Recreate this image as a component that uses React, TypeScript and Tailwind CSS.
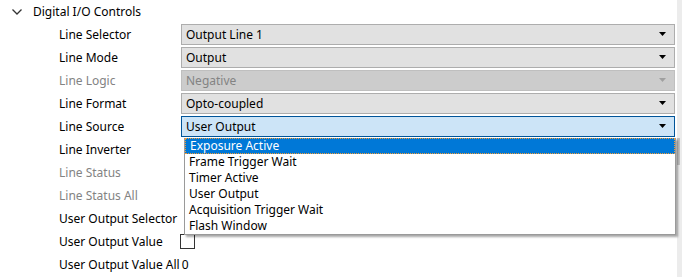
import React from "react";

const font = { fontFamily: '"Noto Sans", "DejaVu Sans", sans-serif' };

function Arrow({ disabled }: { disabled?: boolean }) {
  return (
    <svg width="8" height="5" viewBox="0 0 8 5" className="shrink-0">
      <path d="M0 0H7L3.5 4Z" fill={disabled ? "#a0a0a0" : "#000"} />
    </svg>
  );
}

function Select({ value, variant }: { value: string; variant?: "disabled" | "focus" }) {
  const cls =
    variant === "disabled"
      ? "bg-[#cccccc] border-[#bfbfbf] text-[#838383]"
      : variant === "focus"
      ? "bg-[#cce4f7] border-[#005499] text-black"
      : "bg-[#e1e1e1] border-[#adadad] text-black";
  return (
    <div className={`flex h-[21px] w-[494px] items-center justify-between border pl-[4px] pr-[7px] ${cls}`}>
      <span className="leading-none">{value}</span>
      <Arrow disabled={variant === "disabled"} />
    </div>
  );
}

function Row({ label, disabled, children }: { label: string; disabled?: boolean; children?: React.ReactNode }) {
  return (
    <div className="flex h-[23px] items-center">
      <div className={`w-[181px] shrink-0 pl-[59px] whitespace-nowrap ${disabled ? "text-[#838383]" : "text-black"}`}>
        {label}
      </div>
      {children}
    </div>
  );
}

export default function App() {
  const items = [
    "Exposure Active",
    "Frame Trigger Wait",
    "Timer Active",
    "User Output",
    "Acquisition Trigger Wait",
    "Flash Window",
  ];
  return (
    <div className="relative flex h-[277px] w-[682px] overflow-hidden bg-white text-[12px]" style={font}>
      <div className="w-[677px] shrink-0">
        <div className="flex h-[23px] items-center">
          <svg width="10" height="6" viewBox="0 0 10 6" className="ml-[12px] mr-[11px]">
            <path d="M0.5 0.5L5 5L9.5 0.5" fill="none" stroke="#333" strokeWidth="1.3" />
          </svg>
          <span className="text-black">Digital I/O Controls</span>
        </div>
        <Row label="Line Selector">
          <Select value="Output Line 1" />
        </Row>
        <Row label="Line Mode">
          <Select value="Output" />
        </Row>
        <Row label="Line Logic" disabled>
          <Select value="Negative" variant="disabled" />
        </Row>
        <Row label="Line Format">
          <Select value="Opto-coupled" />
        </Row>
        <Row label="Line Source">
          <Select value="User Output" variant="focus" />
        </Row>
        <Row label="Line Inverter" />
        <Row label="Line Status" disabled />
        <Row label="Line Status All" disabled />
        <Row label="User Output Selector" />
        <Row label="User Output Value">
          <div className="-ml-[1px] h-[15px] w-[15px] border border-[#333333] bg-white" />
        </Row>
        <div className="flex h-[23px] items-center">
          <span className="pl-[59px] whitespace-nowrap text-black">User Output Value All</span>
          <span className="ml-[2px] text-black">0</span>
        </div>
      </div>
      <div className="relative w-[5px] bg-[#ececec]">
        <div className="absolute left-0 top-[138px] h-[27px] w-[3px] bg-[#c2c2c2]" />
      </div>

      <div className="absolute left-[184px] top-[138px] w-[492px] border border-t-0 border-[#9a9a9a] bg-white shadow-[2px_2px_2px_rgba(0,0,0,0.35)]">
        {items.map((it, i) => (
          <div
            key={it}
            className={`flex h-[16px] items-center pl-[4px] leading-none ${
              i === 0 ? "border border-dotted border-[#f39c34] bg-[#0078d7] pl-[3px] text-white" : "text-black"
            }`}
          >
            {it}
          </div>
        ))}
      </div>
    </div>
  );
}
